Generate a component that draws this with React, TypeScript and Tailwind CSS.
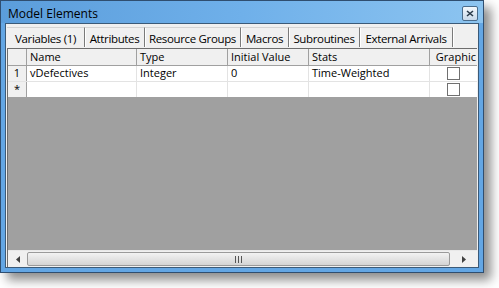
import React from 'react';

const font = { fontFamily: '"Open Sans", "Noto Sans", sans-serif' };

const tabs = [
  { label: 'Variables (1)', w: 'w-[78px]' },
  { label: 'Attributes', w: 'w-[60px]' },
  { label: 'Resource Groups', w: 'w-[96px]' },
  { label: 'Macros', w: 'w-[48px]' },
  { label: 'Subroutines', w: 'w-[71px]' },
  { label: 'External Arrivals', w: 'w-[93px]' },
];

const cols = [
  { label: 'Name', w: 'w-[110px]' },
  { label: 'Type', w: 'w-[91px]' },
  { label: 'Initial Value', w: 'w-[81px]' },
  { label: 'Stats', w: 'w-[121px]' },
];

function CheckBox() {
  return <div className="w-[13px] h-[13px] border border-[#707070] bg-white" />;
}

function Row({ head, cells, last }: { head: string; cells: string[]; last?: boolean }) {
  return (
    <div className={`flex h-[16px] border-b ${last ? 'border-[#a0a0a0]' : 'border-[#e3e3e3]'}`}>
      <div className="w-[19px] shrink-0 bg-[#f0f0f0] border-r border-[#a0a0a0] flex items-center justify-center text-[11px]">
        {head}
      </div>
      {cols.map((c, i) => (
        <div
          key={c.label}
          className={`${c.w} shrink-0 bg-white border-r border-[#e3e3e3] px-[3px] flex items-center text-[11px]`}
        >
          {cells[i]}
        </div>
      ))}
      <div className="flex-1 bg-white flex items-center justify-center">
        <CheckBox />
      </div>
    </div>
  );
}

export default function App() {
  return (
    <div className="w-[499px] h-[288px] bg-white text-black" style={font}>
      <div className="w-[484px] h-[273px] border border-[#2f4e70] bg-[#63a6e4] flex flex-col shadow-[7px_7px_10px_rgba(0,0,0,0.45)]">
        {/* title bar */}
        <div className="h-[22px] shrink-0 flex items-center justify-between pl-[7px] pr-[5px] bg-gradient-to-r from-[#5b9ddb] via-[#6fb0ea] to-[#8cc4f0]">
          <span className="text-[12px] leading-none text-black pt-[3px]">Model Elements</span>
          <div className="w-[16px] h-[15px] mt-[2px] border border-[#4a6c8c] rounded-[2px] bg-gradient-to-b from-[#f4f8fc] to-[#c9d9ea] flex items-center justify-center">
            <svg width="8" height="7" viewBox="0 0 8 7">
              <path d="M1 1 L7 6 M7 1 L1 6" stroke="#2a3a4a" strokeWidth="1.6" />
            </svg>
          </div>
        </div>

        {/* content */}
        <div className="flex-1 mx-[4px] mb-[4px] border border-[#3b5a78] bg-[#f0f0f0] flex flex-col pl-[1px] pr-[1px]">
          {/* tabs */}
          <div className="h-[23px] shrink-0 flex items-end pt-[3px]">
            {tabs.map((t) => (
              <div
                key={t.label}
                className={`${t.w} h-[20px] shrink-0 flex items-center justify-center pt-[3px] border-t border-t-[#d4d4d4] border-r border-r-[#7a7a7a] shadow-[1px_0_0_#ffffff] text-[11.5px] tracking-[-0.35px] leading-none`}
              >
                {t.label}
              </div>
            ))}
          </div>

          {/* grid */}
          <div className="flex-1 flex flex-col border-l border-t border-[#6d6d6d] bg-[#a0a0a0] mt-[1px]">
            <div className="flex h-[17px] bg-[#f0f0f0] border-b border-[#a0a0a0]">
              <div className="w-[19px] shrink-0 border-r border-[#a0a0a0]" />
              {cols.map((c) => (
                <div
                  key={c.label}
                  className={`${c.w} shrink-0 border-r border-[#a0a0a0] px-[3px] flex items-center text-[11px]`}
                >
                  {c.label}
                </div>
              ))}
              <div className="flex-1 flex items-center justify-end pr-[1px] text-[11px] overflow-hidden">Graphic</div>
            </div>
            <Row head="1" cells={['vDefectives', 'Integer', '0', 'Time-Weighted']} />
            <Row head="*" cells={['', '', '', '']} last />
            <div className="flex-1" />
            {/* horizontal scrollbar */}
            <div className="h-[17px] shrink-0 flex bg-[#f0f0f0] border-t border-[#e8e8e8]">
              <div className="w-[19px] flex items-center justify-center">
                <svg width="4" height="7" viewBox="0 0 4 7">
                  <path d="M4 0 L0 3.5 L4 7 Z" fill="#404040" />
                </svg>
              </div>
              <div className="w-[423px] my-[1px] rounded-[2px] border border-[#9a9a9a] bg-gradient-to-b from-[#f2f2f2] to-[#d4d4d4] flex items-center justify-center">
                <div className="flex gap-[2px]">
                  <div className="w-[1px] h-[7px] bg-[#555]" />
                  <div className="w-[1px] h-[7px] bg-[#555]" />
                  <div className="w-[1px] h-[7px] bg-[#555]" />
                </div>
              </div>
              <div className="flex-1 flex items-center justify-center">
                <svg width="4" height="7" viewBox="0 0 4 7">
                  <path d="M0 0 L4 3.5 L0 7 Z" fill="#404040" />
                </svg>
              </div>
            </div>
          </div>
        </div>
      </div>
    </div>
  );
}
